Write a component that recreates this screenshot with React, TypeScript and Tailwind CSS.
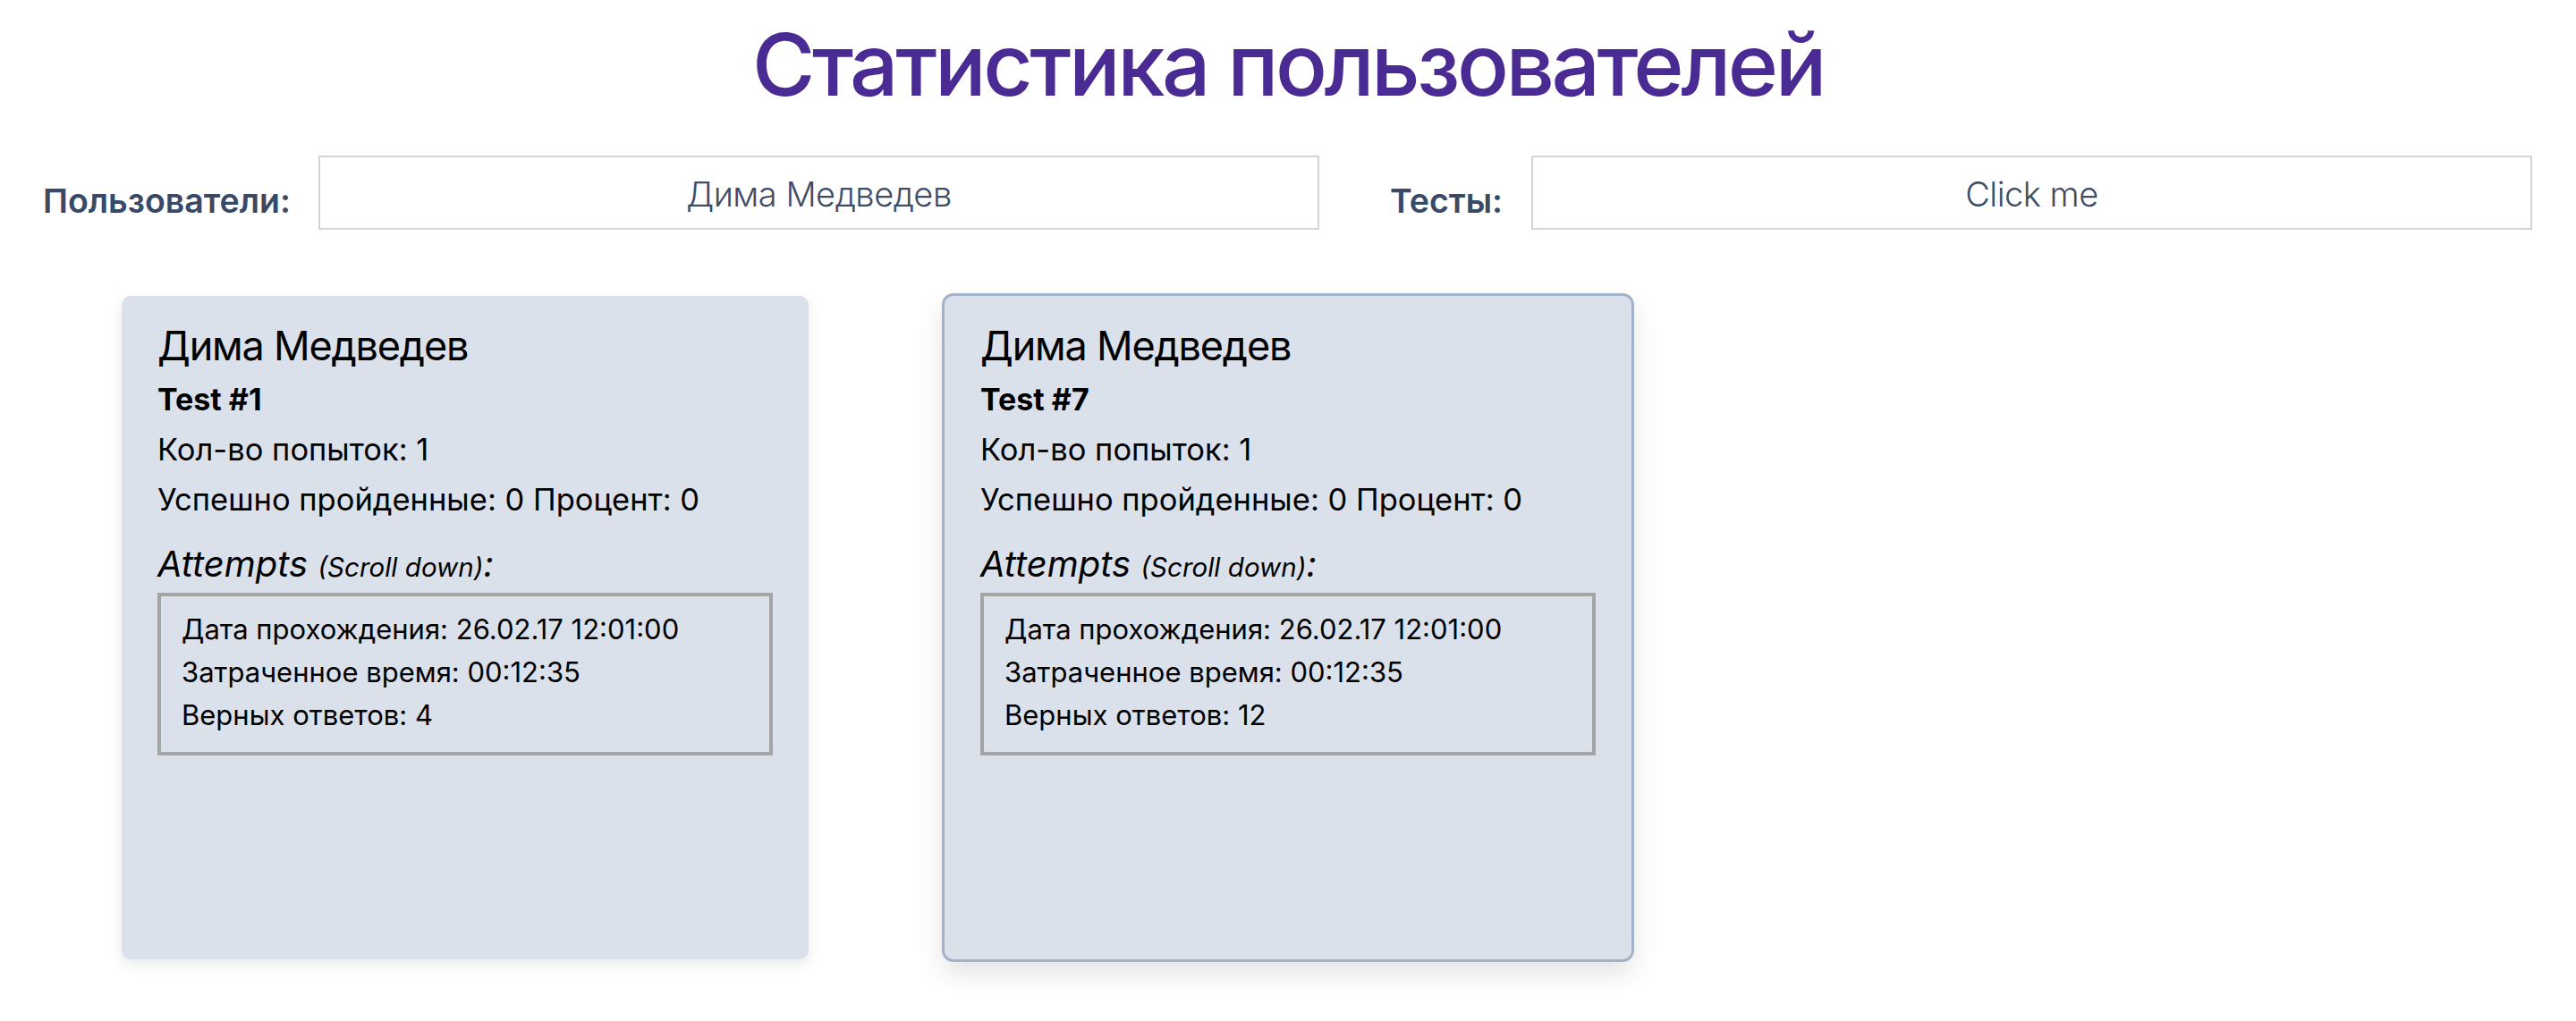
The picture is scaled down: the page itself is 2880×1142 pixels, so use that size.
const attempts = [
  { test: "Test #1", tries: 1, passed: 0, percent: 0, date: "26.02.17 12:01:00", spent: "00:12:35", correct: 4, active: false },
  { test: "Test #7", tries: 1, passed: 0, percent: 0, date: "26.02.17 12:01:00", spent: "00:12:35", correct: 12, active: true },
];

function StatCard({ item }: { item: (typeof attempts)[number] }) {
  return (
    <div
      className={
        item.active
          ? "w-[768px] h-[742px] rounded-[10px] bg-[#dbe1eb] px-[40px] pt-[28px] text-black outline-[3px] outline-solid outline-[#a3b2ca] shadow-[0_14px_32px_rgba(0,0,0,0.13)]"
          : "w-[768px] h-[742px] rounded-[10px] bg-[#dbe1eb] px-[40px] pt-[28px] text-black shadow-[0_6px_16px_rgba(0,0,0,0.09)]"
      }
    >
      <div className="text-[45px] leading-[56px] font-normal tracking-[-1.2px]">Дима Медведев</div>
      <div className="mt-[12px] text-[34px] leading-[40px] font-bold">{item.test}</div>
      <div className="mt-[16px] text-[34.5px] leading-[40px]">Кол-во попыток: {item.tries}</div>
      <div className="mt-[16px] text-[34.5px] leading-[40px]">
        Успешно пройденные: {item.passed} Процент: {item.percent}
      </div>
      <div className="mt-[28px] text-[40px] leading-[48px] italic">
        Attempts <span className="text-[29.5px]">(Scroll down)</span>:
      </div>
      <div className="mt-[5px] border-[4px] border-[#a5a5a5] px-[23px] pt-[13px] pb-[17px] text-[31px] leading-[48px]">
        <div>Дата прохождения: {item.date}</div>
        <div>Затраченное время: {item.spent}</div>
        <div>Верных ответов: {item.correct}</div>
      </div>
    </div>
  );
}

export default function App() {
  return (
    <div className="min-h-[1142px] bg-white font-['Inter','Noto_Sans',sans-serif]">
      <h1 className="pt-[24px] text-center text-[96px] leading-none font-medium tracking-[-3.5px] text-[#4a2b93]">
        Статистика пользователей
      </h1>

      <div className="mt-[54px] flex items-center justify-between pl-[48px] pr-[49px]">
        <div className="flex items-center gap-[31px]">
          <span className="mt-[19px] text-[37.5px] leading-[48px] font-semibold text-[#394a66]">Пользователи:</span>
          <button
            type="button"
            className="h-[83px] w-[1119px] border-2 border-[#d4d4d4] bg-white pt-[4px] text-[38px] font-light tracking-[-0.5px] text-[#3d4d68]"
          >
            Дима Медведев
          </button>
        </div>
        <div className="flex items-center gap-[32px]">
          <span className="mt-[19px] text-[37.5px] leading-[48px] font-semibold text-[#394a66]">Тесты:</span>
          <button
            type="button"
            className="h-[83px] w-[1119px] border-2 border-[#d4d4d4] bg-white pt-[4px] text-[38px] font-light tracking-[-0.5px] text-[#3d4d68]"
          >
            Click me
          </button>
        </div>
      </div>

      <div className="mt-[74px] flex gap-[152px] pl-[136px]">
        {attempts.map((item) => (
          <StatCard key={item.test} item={item} />
        ))}
      </div>
    </div>
  );
}
